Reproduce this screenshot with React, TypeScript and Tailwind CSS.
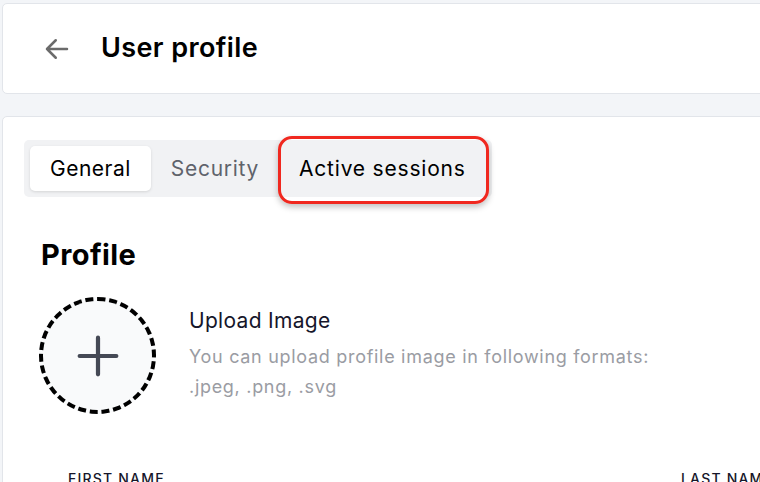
import React from 'react';

const font = { fontFamily: 'Inter, "Noto Sans", sans-serif' };

const BackArrow = () => (
  <svg className="w-[30px] h-[30px] text-[#6b6b6b]" fill="none" viewBox="0 0 24 24" stroke="currentColor">
    <path strokeLinecap="round" strokeLinejoin="round" strokeWidth={2} d="M20 12H4m0 0l7-7m-7 7l7 7" />
  </svg>
);

const PlusIcon = () => (
  <svg className="w-[44px] h-[44px] text-[#454955]" fill="none" viewBox="0 0 24 24" stroke="currentColor">
    <path strokeLinecap="round" strokeWidth={2.3} d="M12 2v20M2 12h20" />
  </svg>
);

export default function App() {
  return (
    <div className="w-[760px] h-[482px] overflow-hidden bg-[#f3f5f8] pt-[3px] pl-[2px] antialiased" style={font}>
      {/* header */}
      <div className="w-[800px] h-[91px] bg-white border border-[#e2e5ea] rounded-l-[5px] flex items-center pl-[39px] gap-[29px]">
        <BackArrow />
        <h1 className="text-[27px] font-semibold text-black tracking-[0.4px]">User profile</h1>
      </div>

      {/* content */}
      <div className="mt-[22px] w-[800px] h-[400px] bg-white border border-[#e2e5ea] rounded-l-[5px] pt-[23px] pl-[21px]">
        <div className="inline-flex items-center bg-[#f1f2f4] rounded-[5px] p-[6px]">
          <button className="h-[45px] px-[20px] rounded-[5px] bg-white shadow-[0_1px_3px_rgba(0,0,0,0.12)] text-[21px] tracking-[0.5px] text-black">
            General
          </button>
          <button className="h-[45px] px-[20px] text-[21px] tracking-[0.7px] text-[#5f636b]">Security</button>
          <div className="relative">
            <button className="h-[45px] px-[20px] text-[21px] tracking-[0.8px] text-black">Active sessions</button>
            <div className="absolute -left-[1px] -top-[10px] -bottom-[13px] -right-[3px] border-[3px] border-[#f0281f] rounded-[14px] shadow-[0_3px_6px_rgba(0,0,0,0.25)] pointer-events-none" />
          </div>
        </div>

        <h2 className="mt-[43px] ml-[17px] text-[29px] font-bold text-black leading-none tracking-[0.4px]">Profile</h2>

        <div className="mt-[28px] ml-[15px] flex items-start gap-[33px]">
          <div className="w-[117px] h-[117px] rounded-full border-[4px] border-dashed border-black bg-[#f9fafb] flex items-center justify-center shrink-0">
            <PlusIcon />
          </div>
          <div className="pt-[9px]">
            <div className="text-[21px] tracking-[0.3px] text-[#16162a] leading-[30px]">Upload Image</div>
            <p className="mt-[6px] text-[18px] tracking-[0.7px] text-[#9a9ca3] leading-[30px]">
              You can upload profile image in following formats:
              <br />
              .jpeg, .png, .svg
            </p>
          </div>
        </div>

        <div className="mt-[54px] flex text-[14px] text-[#16162a] tracking-[1.2px] uppercase font-medium">
          <div className="pl-[44px] w-[657px]">First name</div>
          <div className="whitespace-nowrap">Last name</div>
        </div>
      </div>
    </div>
  );
}
